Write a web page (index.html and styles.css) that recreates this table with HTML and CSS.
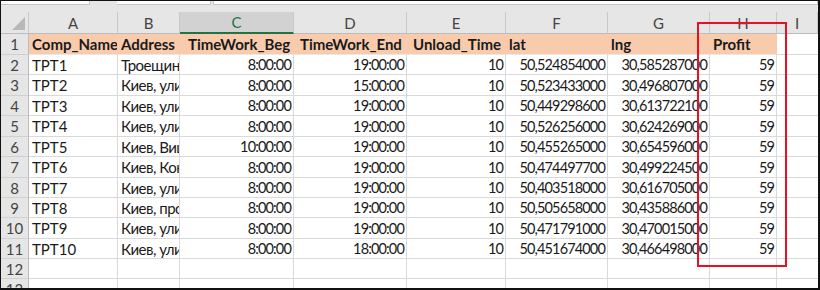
FILE: index.html
```html
<!DOCTYPE html>
<html lang="ru">
<head>
<meta charset="utf-8">
<title>Sheet</title>
<link rel="stylesheet" href="styles.css">
</head>
<body>
<div class="frame">
  <div class="topbar">
    <div class="tb name"></div>
    <div class="tb mid"></div>
    <div class="tb formula"></div>
  </div>
  <div class="gap"></div>
  <div class="sheet">
    <div class="row head">
      <div class="c corner"><span class="tri"></span></div>
      <div class="c ch">A</div><div class="c ch">B</div><div class="c ch sel">C</div><div class="c ch">D</div><div class="c ch">E</div><div class="c ch">F</div><div class="c ch">G</div><div class="c ch">H</div><div class="c ch last">I</div>
    </div>
    <div class="row tall hdr">
      <div class="c rh">1</div>
      <div class="c o">Comp_Name</div><div class="c o">Address</div><div class="c o ind">TimeWork_Beg</div><div class="c o ind2">TimeWork_End</div><div class="c o ind2">Unload_Time</div><div class="c o">lat</div><div class="c o">lng</div><div class="c o">Profit</div><div class="c last"></div>
    </div>
    <div class="row">
      <div class="c rh">2</div><div class="c">TPT1</div><div class="c addr">Троещина</div><div class="c r">8:00:00</div><div class="c r">19:00:00</div><div class="c r">10</div><div class="c r">50,524854000</div><div class="c r">30,585287000</div><div class="c r">59</div><div class="c last"></div>
    </div>
    <div class="row tall">
      <div class="c rh">3</div><div class="c">TPT2</div><div class="c addr">Киев, улиц</div><div class="c r">8:00:00</div><div class="c r">15:00:00</div><div class="c r">10</div><div class="c r">50,523433000</div><div class="c r">30,496807000</div><div class="c r">59</div><div class="c last"></div>
    </div>
    <div class="row">
      <div class="c rh">4</div><div class="c">TPT3</div><div class="c addr">Киев, улиц</div><div class="c r">8:00:00</div><div class="c r">19:00:00</div><div class="c r">10</div><div class="c r">50,449298600</div><div class="c r">30,613722100</div><div class="c r">59</div><div class="c last"></div>
    </div>
    <div class="row tall">
      <div class="c rh">5</div><div class="c">TPT4</div><div class="c addr">Киев, улиц</div><div class="c r">8:00:00</div><div class="c r">19:00:00</div><div class="c r">10</div><div class="c r">50,526256000</div><div class="c r">30,624269000</div><div class="c r">59</div><div class="c last"></div>
    </div>
    <div class="row">
      <div class="c rh">6</div><div class="c">TPT5</div><div class="c addr">Киев, Вишн</div><div class="c r">10:00:00</div><div class="c r">19:00:00</div><div class="c r">10</div><div class="c r">50,455265000</div><div class="c r">30,654596000</div><div class="c r">59</div><div class="c last"></div>
    </div>
    <div class="row tall">
      <div class="c rh">7</div><div class="c">TPT6</div><div class="c addr">Киев, Конс</div><div class="c r">8:00:00</div><div class="c r">19:00:00</div><div class="c r">10</div><div class="c r">50,474497700</div><div class="c r">30,499224500</div><div class="c r">59</div><div class="c last"></div>
    </div>
    <div class="row">
      <div class="c rh">8</div><div class="c">TPT7</div><div class="c addr">Киев, улиц</div><div class="c r">8:00:00</div><div class="c r">19:00:00</div><div class="c r">10</div><div class="c r">50,403518000</div><div class="c r">30,616705000</div><div class="c r">59</div><div class="c last"></div>
    </div>
    <div class="row">
      <div class="c rh">9</div><div class="c">TPT8</div><div class="c addr">Киев, прос</div><div class="c r">8:00:00</div><div class="c r">19:00:00</div><div class="c r">10</div><div class="c r">50,505658000</div><div class="c r">30,435886000</div><div class="c r">59</div><div class="c last"></div>
    </div>
    <div class="row tall">
      <div class="c rh">10</div><div class="c">TPT9</div><div class="c addr">Киев, улиц</div><div class="c r">8:00:00</div><div class="c r">19:00:00</div><div class="c r">10</div><div class="c r">50,471791000</div><div class="c r">30,470015000</div><div class="c r">59</div><div class="c last"></div>
    </div>
    <div class="row">
      <div class="c rh">11</div><div class="c">TPT10</div><div class="c addr">Киев, улиц</div><div class="c r">8:00:00</div><div class="c r">18:00:00</div><div class="c r">10</div><div class="c r">50,451674000</div><div class="c r">30,466498000</div><div class="c r">59</div><div class="c last"></div>
    </div>
    <div class="row">
      <div class="c rh">12</div><div class="c"></div><div class="c"></div><div class="c"></div><div class="c"></div><div class="c"></div><div class="c"></div><div class="c"></div><div class="c"></div><div class="c last"></div>
    </div>
    <div class="row">
      <div class="c rh">13</div><div class="c"></div><div class="c"></div><div class="c"></div><div class="c"></div><div class="c"></div><div class="c"></div><div class="c"></div><div class="c"></div><div class="c last"></div>
    </div>
  </div>
  <div class="highlight"></div>
</div>
</body>
</html>
```
FILE: styles.css
```css
html, body {
  margin: 0;
  padding: 0;
  background: #ffffff;
}

.frame {
  position: relative;
  box-sizing: border-box;
  width: 820px;
  height: 290px;
  border-top: 1px solid #111;
  border-left: 1px solid #111;
  border-right: 2px solid #111;
  border-bottom: 2px solid #111;
  overflow: hidden;
  background: #e6e6e6;
  font-family: Lato, "Liberation Sans", sans-serif;
  font-size: 15px;
  color: #1a1a1a;
}

.topbar {
  display: flex;
  height: 4px;
  gap: 2px;
  background: #e6e6e6;
}

.tb {
  box-sizing: border-box;
  height: 4px;
  background: #fff;
  border-bottom: 1px solid #c6c6c6;
  border-right: 1px solid #c6c6c6;
}

.tb.name { width: 89px; }
.tb.mid { width: 94px; margin-left: 25px; }
.tb.formula { flex: 1; border-left: 1px solid #c6c6c6; }

.gap {
  height: 7px;
  background: #e6e6e6;
}

.sheet {
  display: flex;
  flex-direction: column;
  background: #fff;
}

.row {
  display: grid;
  grid-template-columns: 28px 89px 62px 114px 113px 99px 102px 102px 67px 1fr;
  height: 20px;
}

.row.tall { height: 21px; }
.row.head { height: 22px; }

.c {
  box-sizing: border-box;
  border-right: 1px solid #d9d9d9;
  border-bottom: 1px solid #d9d9d9;
  overflow: hidden;
  white-space: nowrap;
  display: flex;
  align-items: center;
  padding: 0 3px;
  min-width: 0;
}

.c.last { border-right: none; }

.c.addr { letter-spacing: -0.5px; }

.c.r {
  justify-content: flex-end;
  font-size: 14.5px;
  letter-spacing: -0.85px;
  padding-right: 2px;
}

.head .c {
  background: #e6e6e6;
  justify-content: center;
  color: #444;
  border-right: 1px solid #c9c9c9;
  border-bottom: 1px solid #bcbcbc;
  padding: 0;
}

.head .c.sel {
  background: #d2d2d2;
  color: #217346;
  border-bottom: 2px solid #217346;
}

.head .corner {
  position: relative;
  background: #e6e6e6;
}

.tri {
  position: absolute;
  right: 3px;
  bottom: 3px;
  width: 0;
  height: 0;
  border-left: 13px solid transparent;
  border-bottom: 13px solid #b8b8b8;
}

.c.rh {
  background: #e6e6e6;
  color: #444;
  justify-content: center;
  padding: 0;
  border-right: 1px solid #bcbcbc;
  border-bottom: 1px solid #d0d0d0;
}

.c.o {
  background: #f8cbad;
  font-weight: 700;
  border-right-color: #f8cbad;
  border-bottom-color: #e8e8e8;
}

.c.ind { padding-left: 8px; }
.c.ind2 { padding-left: 6px; }

.highlight {
  position: absolute;
  left: 696px;
  top: 21px;
  width: 90px;
  height: 245px;
  box-sizing: border-box;
  border: 2px solid #e81123;
}
```
